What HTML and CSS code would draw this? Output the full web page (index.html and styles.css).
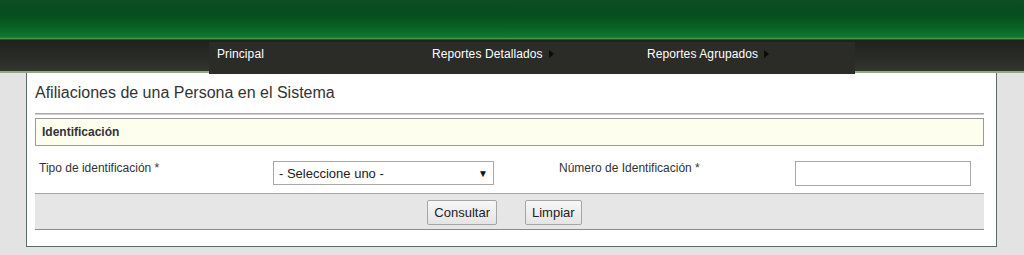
FILE: index.html
```html
<!DOCTYPE html>
<html lang="es">
<head>
<meta charset="utf-8">
<title>Afiliaciones de una Persona en el Sistema</title>
<link rel="stylesheet" href="styles.css">
</head>
<body>
<header class="banner"></header>
<nav class="navbar">
  <ul class="menu">
    <li class="menu-item">Principal</li>
    <li class="menu-item">Reportes Detallados<span class="arrow"></span></li>
    <li class="menu-item">Reportes Agrupados<span class="arrow"></span></li>
  </ul>
</nav>
<main class="panel">
  <h1 class="title">Afiliaciones de una Persona en el Sistema</h1>
  <div class="divider"></div>
  <div class="section-head">Identificación</div>
  <div class="form-row">
    <label class="label">Tipo de identificación *</label>
    <div class="select"><span>- Seleccione uno -</span><span class="caret">▼</span></div>
    <label class="label label-2">Número de Identificación *</label>
    <div class="input"></div>
  </div>
  <div class="button-bar">
    <button class="btn">Consultar</button>
    <button class="btn">Limpiar</button>
  </div>
</main>
</body>
</html>
```

FILE: styles.css
```css
html, body {
  margin: 0;
  padding: 0;
}
body {
  background: #e3e3e3;
  font-family: "Liberation Sans", Arial, sans-serif;
  color: #333;
  height: 255px;
  overflow: hidden;
}
.banner {
  height: 40px;
  background: linear-gradient(to bottom, #0b4f22 0%, #064c1d 35%, #086426 70%, #0e7830 93%, #4b9a4c 96%, #17301c 100%);
}
.navbar {
  height: 31px;
  background: linear-gradient(to bottom, #1f211d 0%, #2a2c27 60%, #34362f 100%);
  border-bottom: 2px solid #93a886;
  box-sizing: content-box;
  position: relative;
}
.menu {
  list-style: none;
  margin: 0 0 0 209px;
  padding: 0;
  width: 646px;
  height: 31px;
  display: flex;
  background: #2b2c28;
  position: relative;
  top: 2px;
  box-shadow: 0 1px 0 #2b2c28;
}
.menu-item {
  width: 215px;
  padding: 5px 0 0 8px;
  box-sizing: border-box;
  color: #fff;
  font-size: 12px;
  letter-spacing: 0.1px;
  line-height: 14px;
  display: flex;
  align-items: flex-start;
}
.arrow {
  display: inline-block;
  width: 0;
  height: 0;
  margin: 3px 0 0 6px;
  border-top: 4px solid transparent;
  border-bottom: 4px solid transparent;
  border-left: 5px solid #0b0b0b;
}
.panel {
  margin: 0 27px 0 26px;
  background: #fff;
  border: 1px solid #5d6a6a;
  border-top: none;
  padding: 0 12px 16px 8px;
  height: 157px;
  box-sizing: content-box;
}
.title {
  margin: 0;
  padding-top: 11px;
  font-size: 16px;
  font-weight: normal;
  line-height: 18px;
  color: #333;
  height: 29px;
}
.divider {
  border-top: 1px solid #a9a9a9;
  border-bottom: 1px solid #cfcfcf;
}
.section-head {
  margin-top: 3px;
  height: 26px;
  background: #fefeee;
  border: 1px solid #9a9a9a;
  font-size: 12px;
  font-weight: bold;
  line-height: 26px;
  padding-left: 6px;
  color: #333;
}
.form-row {
  display: grid;
  grid-template-columns: 238px 221px 301px 176px;
  padding-top: 15px;
  height: 32px;
}
.label {
  font-size: 12px;
  line-height: 14px;
  padding-left: 4px;
  color: #333;
}
.label-2 {
  padding-left: 65px;
}
.select {
  height: 24px;
  border: 1px solid #a9a9a9;
  box-sizing: border-box;
  background: #fff;
  display: flex;
  justify-content: space-between;
  align-items: center;
  padding: 0 5px 0 5px;
  font-size: 13px;
  color: #222;
}
.caret {
  font-size: 10px;
  color: #111;
  padding-top: 1px;
}
.input {
  height: 25px;
  border: 1px solid #a9a9a9;
  box-sizing: border-box;
  background: #fff;
}
.button-bar {
  background: #e6e6e6;
  border-top: 1px solid #a5a5a5;
  border-bottom: 1px solid #8a8a8a;
  height: 35px;
  display: flex;
  justify-content: center;
  align-items: center;
  gap: 28px;
  padding-right: 10px;
}
.btn {
  font-family: "Liberation Sans", Arial, sans-serif;
  font-size: 13px;
  color: #222;
  height: 25px;
  padding: 0 6px;
  background: linear-gradient(to bottom, #f7f7f7, #e4e4e4);
  border: 1px solid #a5a5a5;
  border-radius: 2px;
  margin-top: 1px;
}
```
